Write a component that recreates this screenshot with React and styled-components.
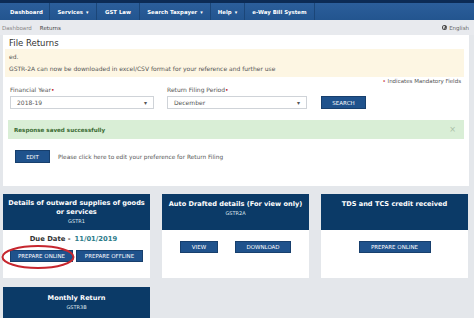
import React from 'react';
import styled, {createGlobalStyle} from 'styled-components';

const Global = createGlobalStyle`
  html, body {
    margin: 0;
    padding: 0;
    background: #e4e7eb;
    font-family: "DejaVu Sans", Verdana, sans-serif;
    width: 474px;
    height: 318px;
    overflow: hidden;
  }
`;

const NavBar = styled.div`
  display: flex;
  height: 17px;
  padding-left: 4px;
  border-top: 3px solid #0c2b55;
  background: linear-gradient(#2b5e9b, #23558f);
`;

const NavItem = styled.div`
  display: flex;
  align-items: center;
  justify-content: center;
  width: ${props => props.w}px;
  color: #fff;
  font-size: 5.4px;
  font-weight: bold;
  border-right: 1px solid #1b4678;
  white-space: nowrap;
`;

const Caret = styled.span`
  margin-left: 3px;
  font-size: 5px;
`;

const Crumbs = styled.div`
  display: flex;
  align-items: center;
  justify-content: space-between;
  height: 15px;
  padding: 0 5px 0 2px;
  font-size: 5.5px;
  color: #888;
  background: #e8eaee;
`;

const CrumbCurrent = styled.span`
  color: #444;
  margin-left: 8px;
`;

const Lang = styled.span`
  display: flex;
  align-items: center;
  gap: 2px;
  color: #666;
`;

const Panel = styled.div`
  margin: 0 5px 0 3px;
  padding: 3px 5px 8px 2px;
  background: #fff;
  height: 140px;
`;

const Title = styled.div`
  font-size: 8.5px;
  color: #333;
  padding-left: 4px;
  height: 11px;
  line-height: 11px;
`;

const Notice = styled.div`
  background: #fdf6e3;
  padding: 2px 4px;
  font-size: 6px;
  color: #555;
  line-height: 12px;
`;

const Mandatory = styled.div`
  text-align: right;
  font-size: 5.5px;
  color: #555;
  padding-right: 3px;
  line-height: 8px;
`;

const Star = styled.span`
  color: #c0121b;
`;

const FormRow = styled.div`
  display: flex;
  align-items: flex-end;
  padding-left: 5px;
  margin-top: 1px;
`;

const Field = styled.div`
  display: flex;
  flex-direction: column;
  width: ${props => props.w}px;
  margin-right: ${props => props.mr}px;
`;

const Label = styled.div`
  font-size: 6px;
  line-height: 7px;
  color: #555;
  margin-bottom: 3px;
`;

const Select = styled.div`
  display: flex;
  align-items: center;
  justify-content: space-between;
  height: 11px;
  border: 1px solid #cfd3d8;
  padding: 0 6px;
  font-size: 6px;
  color: #555;
  background: #fff;
`;

const Button = styled.div`
  display: flex;
  align-items: center;
  justify-content: center;
  height: ${props => props.h || 12}px;
  width: ${props => props.w}px;
  background: #1f528c;
  color: #fff;
  font-size: 5.5px;
  border: 1px solid #173f6d;
  box-sizing: border-box;
  white-space: nowrap;
`;

const Alert = styled.div`
  display: flex;
  align-items: center;
  justify-content: space-between;
  margin: 11px 0 0 3px;
  height: 19px;
  padding: 0 8px 0 6px;
  background: #d9eed6;
  color: #3a6b33;
  font-size: 5.6px;
  font-weight: bold;
`;

const Close = styled.span`
  color: #a9bfa6;
  font-size: 8px;
  font-weight: normal;
`;

const EditRow = styled.div`
  display: flex;
  align-items: center;
  gap: 8px;
  margin: 11px 0 0 10px;
  font-size: 5.8px;
  color: #555;
`;

const Cards = styled.div`
  display: grid;
  grid-template-columns: repeat(3, 147px);
  gap: 9px 12px;
  padding: 8px 0 0 3px;
  position: relative;
`;

const Card = styled.div`
  background: #fff;
  height: ${props => props.h || 84}px;
`;

const CardHead = styled.div`
  height: 36px;
  background: #0b3a67;
  color: #fff;
  text-align: center;
  padding-top: ${props => props.pt || 5}px;
  box-sizing: border-box;
`;

const CardTitle = styled.div`
  font-size: 6.6px;
  font-weight: bold;
  line-height: 9px;
  padding: 0 4px;
`;

const CardSub = styled.div`
  font-size: 5px;
  line-height: 9px;
  color: #dfe6ee;
`;

const CardBody = styled.div`
  display: flex;
  flex-direction: column;
  align-items: center;
  padding-top: ${props => props.pt || 6}px;
`;

const Due = styled.div`
  font-size: 6.8px;
  font-weight: bold;
  color: #333;
  line-height: 9px;
  margin: 0 6px 6px 0;
`;

const DueDate = styled.span`
  color: #2d7c8a;
  margin-left: 4px;
`;

const BtnRow = styled.div`
  display: flex;
  gap: ${props => props.gap || 4}px;
`;

const Ring = styled.svg`
  position: absolute;
  left: 0;
  top: 58px;
  pointer-events: none;
`;

const Globe = () => (
  <svg width="5" height="5" viewBox="0 0 10 10">
    <circle cx="5" cy="5" r="5" fill="#444" />
    <path d="M2 3 L5 2 L6 4 L4 6 L5 8 L3 8 Z M7 6 L9 5 L8 8 Z" fill="#fff" />
  </svg>
);

export default function App() {
  return (
    <>
      <Global />
      <NavBar>
        <NavItem w={45}>Dashboard</NavItem>
        <NavItem w={46}>Services<Caret>▾</Caret></NavItem>
        <NavItem w={42}>GST Law</NavItem>
        <NavItem w={70}>Search Taxpayer<Caret>▾</Caret></NavItem>
        <NavItem w={33}>Help<Caret>▾</Caret></NavItem>
        <NavItem w={69}>e-Way Bill System</NavItem>
      </NavBar>
      <Crumbs>
        <span>Dashboard<CrumbCurrent>Returns</CrumbCurrent></span>
        <Lang><Globe />English</Lang>
      </Crumbs>
      <Panel>
        <Title>File Returns</Title>
        <Notice>
          ed.<br />
          GSTR-2A can now be downloaded in excel/CSV format for your reference and further use
        </Notice>
        <Mandatory><Star>•</Star> Indicates Mandatory Fields</Mandatory>
        <FormRow>
          <Field w={144} mr={13}>
            <Label>Financial Year<Star>•</Star></Label>
            <Select>2018-19<span>▾</span></Select>
          </Field>
          <Field w={140} mr={14}>
            <Label>Return Filing Period<Star>•</Star></Label>
            <Select>December<span>▾</span></Select>
          </Field>
          <Button w={45} h={13}>SEARCH</Button>
        </FormRow>
        <Alert>Response saved successfully<Close>×</Close></Alert>
        <EditRow>
          <Button w={35} h={13}>EDIT</Button>
          Please click here to edit your preference for Return Filing
        </EditRow>
      </Panel>
      <Cards>
        <Card>
          <CardHead pt={5}>
            <CardTitle>Details of outward supplies of goods or services</CardTitle>
            <CardSub>GSTR1</CardSub>
          </CardHead>
          <CardBody pt={5}>
            <Due>Due Date -<DueDate>11/01/2019</DueDate></Due>
            <BtnRow gap={3}>
              <Button w={63} h={12}>PREPARE ONLINE</Button>
              <Button w={67} h={12}>PREPARE OFFLINE</Button>
            </BtnRow>
          </CardBody>
        </Card>
        <Card>
          <CardHead pt={6}>
            <CardTitle>Auto Drafted details (For view only)</CardTitle>
            <CardSub>GSTR2A</CardSub>
          </CardHead>
          <CardBody pt={11}>
            <BtnRow gap={17}>
              <Button w={38} h={12}>VIEW</Button>
              <Button w={56} h={12}>DOWNLOAD</Button>
            </BtnRow>
          </CardBody>
        </Card>
        <Card>
          <CardHead pt={6}>
            <CardTitle>TDS and TCS credit received</CardTitle>
          </CardHead>
          <CardBody pt={11}>
            <Button w={72} h={12}>PREPARE ONLINE</Button>
          </CardBody>
        </Card>
        <Card h={40}>
          <CardHead pt={7}>
            <CardTitle>Monthly Return</CardTitle>
            <CardSub>GSTR3B</CardSub>
          </CardHead>
        </Card>
        <Ring width="80" height="28" viewBox="0 0 80 28">
          <ellipse cx="38" cy="13" rx="35.5" ry="11" fill="none" stroke="#c6262e" strokeWidth="2" />
        </Ring>
      </Cards>
    </>
  );
}
